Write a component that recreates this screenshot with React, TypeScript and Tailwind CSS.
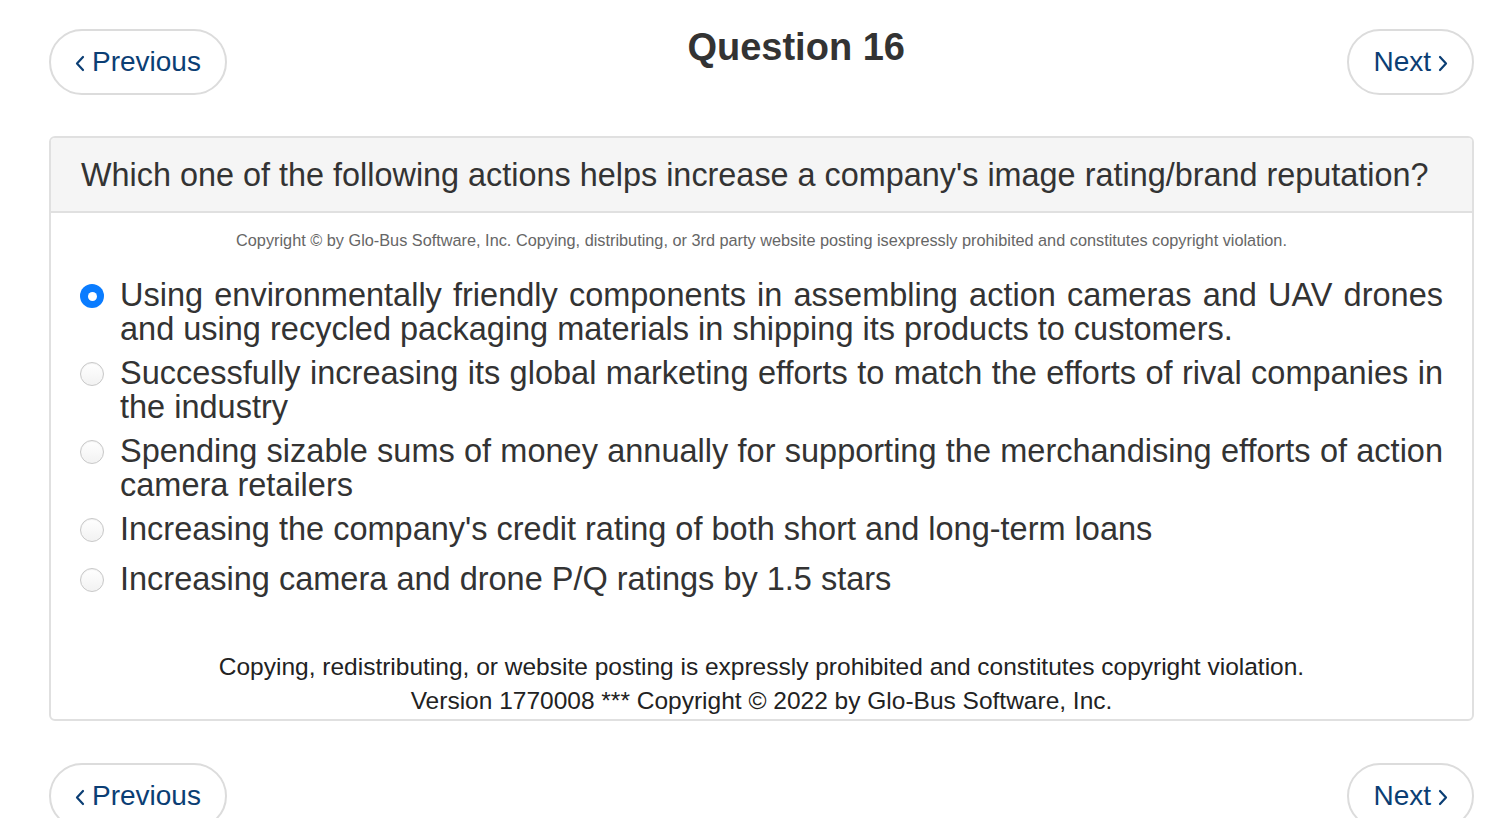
import React from 'react';

const OPTIONS = [
  'Using environmentally friendly components in assembling action cameras and UAV drones and using recycled packaging materials in shipping its products to customers.',
  'Successfully increasing its global marketing efforts to match the efforts of rival companies in the industry',
  'Spending sizable sums of money annually for supporting the merchandising efforts of action camera retailers',
  "Increasing the company's credit rating of both short and long-term loans",
  'Increasing camera and drone P/Q ratings by 1.5 stars',
];

function Chevron({ dir }: { dir: 'prev' | 'next' }) {
  return (
    <svg width="10" height="17" viewBox="0 0 10 17" className="mt-[3px]">
      <path
        d={dir === 'prev' ? 'M8 2 L2 8.5 L8 15' : 'M2 2 L8 8.5 L2 15'}
        fill="none"
        stroke="#0b3e74"
        strokeWidth="2.2"
        strokeLinecap="round"
        strokeLinejoin="round"
      />
    </svg>
  );
}

function NavButton({ label, dir }: { label: string; dir: 'prev' | 'next' }) {
  return (
    <button className="h-[66px] rounded-full border-2 border-[#dcdcdc] bg-white px-[24px] text-[28px] text-[#0b3e74] flex items-center gap-[7px]">
      {dir === 'prev' && <Chevron dir="prev" />}
      <span>{label}</span>
      {dir === 'next' && <Chevron dir="next" />}
    </button>
  );
}

function Radio({ checked }: { checked: boolean }) {
  if (checked) {
    return (
      <span className="mt-[6px] w-[24px] h-[24px] rounded-full bg-[#0a7cff] flex items-center justify-center shrink-0">
        <span className="w-[9px] h-[9px] rounded-full bg-white" />
      </span>
    );
  }
  return (
    <span className="mt-[6px] w-[24px] h-[24px] rounded-full border border-[#c8c8c8] bg-gradient-to-b from-white to-[#f2f2f2] shadow-[inset_0_1px_1px_rgba(0,0,0,0.06)] shrink-0" />
  );
}

export default function App() {
  return (
    <div
      className="min-h-screen bg-white pl-[49px] pr-[28px] pt-[29px]"
      style={{ fontFamily: '"Liberation Sans", Arial, Helvetica, sans-serif' }}
    >
      <div className="flex items-start">
        <NavButton label="Previous" dir="prev" />
        <h1 className="flex-1 text-center pl-[18px] text-[38px] leading-[36px] font-bold text-[#333]">
          Question 16
        </h1>
        <NavButton label="Next" dir="next" />
      </div>

      <div className="mt-[41px] border-2 border-[#e0e0e0] rounded-[6px] overflow-hidden">
        <div className="bg-[#f5f5f5] border-b-2 border-[#e0e0e0] h-[75px] flex items-center px-[30px] pt-[2px] text-[32.4px] text-[#333] whitespace-nowrap">
          Which one of the following actions helps increase a company's image rating/brand reputation?
        </div>
        <div className="px-[29px] pb-[1px]">
          <p className="text-center text-[16.3px] text-[#666] mt-[15px] whitespace-nowrap">
            Copyright © by Glo-Bus Software, Inc. Copying, distributing, or 3rd party website posting isexpressly prohibited and constitutes copyright violation.
          </p>
          <div className="mt-[26px] flex flex-col gap-[10px]">
            {OPTIONS.map((o, i) => (
              <label key={i} className={`flex items-start gap-[16px] ${i === 4 ? 'mt-[6px]' : ''}`}>
                <Radio checked={i === 0} />
                <span className="text-[32.5px] leading-[34px] text-[#333] text-justify">{o}</span>
              </label>
            ))}
          </div>
          <div className="mt-[54px] text-center text-[24.5px] leading-[34px] text-[#222] whitespace-nowrap">
            <p>Copying, redistributing, or website posting is expressly prohibited and constitutes copyright violation.</p>
            <p>Version 1770008 *** Copyright © 2022 by Glo-Bus Software, Inc.</p>
          </div>
        </div>
      </div>

      <div className="mt-[42px] flex justify-between">
        <NavButton label="Previous" dir="prev" />
        <NavButton label="Next" dir="next" />
      </div>
    </div>
  );
}
